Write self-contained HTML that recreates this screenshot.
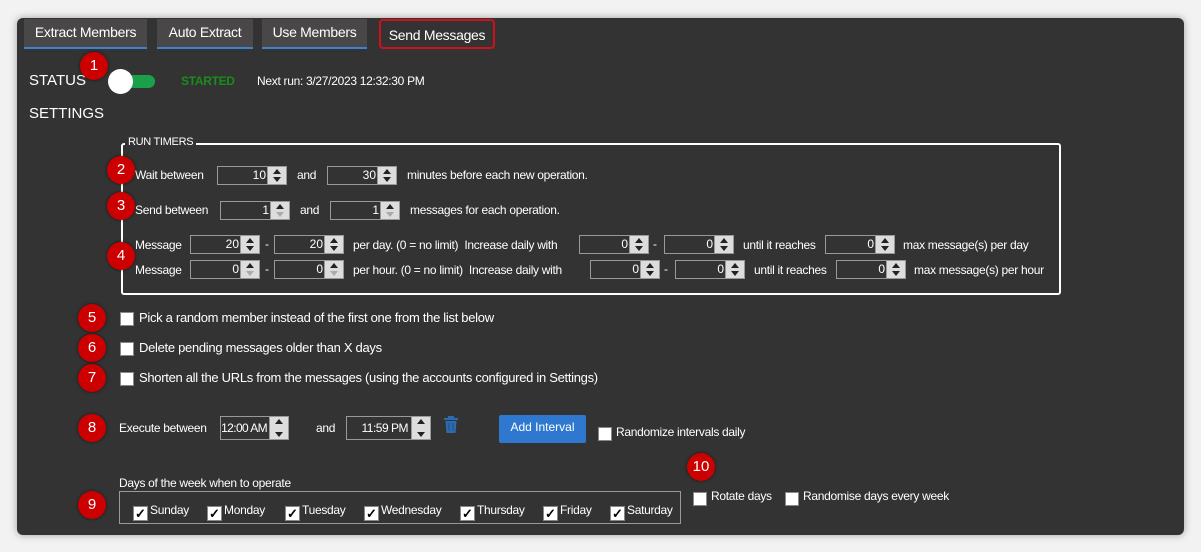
<!DOCTYPE html>
<html><head><meta charset="utf-8"><style>
body{margin:0;width:1201px;height:552px;background:#f2f2f2;position:relative;overflow:hidden;font-family:"Liberation Sans",sans-serif;color:#fff}
#win{position:absolute;left:17px;top:18px;width:1167px;height:517px;background:#333;border-radius:6px;box-shadow:0 0 8px rgba(0,0,0,.35)}
.a{position:absolute;white-space:nowrap}
.s{font-size:12px;letter-spacing:-.3px}
.m{font-size:13px;letter-spacing:-.3px}
.tab{position:absolute;top:19px;height:28px;background:#4a4748;border-bottom:2px solid #3b82d0;font-size:14px;letter-spacing:-.3px;line-height:26px;text-align:center;color:#fff}
.c{position:absolute;width:28px;height:28px;border-radius:50%;background:#c00;box-shadow:0 0 3px rgba(0,0,0,.6);color:#fff;font-size:15px;text-align:center;line-height:28px}
.box{position:absolute;border:1px solid #999;background:#333;box-sizing:border-box;height:19px;font-size:12px;line-height:17px;text-align:right}
.box span{position:absolute;right:20px;top:0;white-space:nowrap}
.sp{position:absolute;right:0;top:0;width:18px;height:17px;background:#ddd;border-left:1px solid #999}
.sp:before,.sp:after{content:"";position:absolute;left:5px;border-left:4px solid transparent;border-right:4px solid transparent}
.sp:before{top:2px;border-bottom:5px solid #222}
.sp:after{bottom:2px;border-top:5px solid #222}
.sp.g:after{border-top-color:#aaa}
.cb{position:absolute;width:12px;height:12px;background:#fff;border:1px solid #888}
.ck{position:absolute;width:13px;height:13px;background:#fff;border:1px solid #888;color:#000;font-size:13px;line-height:13px;text-align:center;font-weight:bold}
</style></head><body>
<div id="win"></div>
<div class="tab" style="left:24px;width:123px">Extract Members</div>
<div class="tab" style="left:157px;width:96px">Auto Extract</div>
<div class="tab" style="left:262px;width:105px">Use Members</div>
<div class="a" style="left:379px;top:19px;width:116px;height:30px;border:2px solid #d0101c;border-radius:4px;box-sizing:border-box;font-size:14px;letter-spacing:-.3px;text-align:center;line-height:28px">Send Messages</div>

<div class="a" style="left:29px;top:72px;font-size:15px">STATUS</div>
<div class="a" style="left:112px;top:75px;width:43px;height:13px;background:#1aa04a;border-radius:7px"></div>
<div class="a" style="left:108px;top:69px;width:25px;height:25px;background:#fff;border-radius:50%"></div>
<div class="a s" style="left:181px;top:74px;color:#1a8c1a;font-weight:bold">STARTED</div>
<div class="a s" style="left:257px;top:74px">Next run: 3/27/2023 12:32:30 PM</div>
<div class="a" style="left:29px;top:105px;font-size:15px">SETTINGS</div>

<div class="a" style="left:121px;top:143px;width:940px;height:152px;border:2px solid #fff;border-radius:3px;box-sizing:border-box"></div>
<div class="a s" style="left:125px;top:136px;background:#333;padding:0 3px;font-size:11px">RUN TIMERS</div>

<div class="a s" style="left:135px;top:168px">Wait between</div>
<div class="box" style="left:217px;top:166px;width:70px"><span>10</span><div class="sp"></div></div>
<div class="a s" style="left:297px;top:168px">and</div>
<div class="box" style="left:327px;top:166px;width:70px"><span>30</span><div class="sp"></div></div>
<div class="a s" style="left:407px;top:168px">minutes before each new operation.</div>

<div class="a s" style="left:135px;top:203px">Send between</div>
<div class="box" style="left:220px;top:201px;width:70px"><span>1</span><div class="sp g"></div></div>
<div class="a s" style="left:300px;top:203px">and</div>
<div class="box" style="left:330px;top:201px;width:70px"><span>1</span><div class="sp g"></div></div>
<div class="a s" style="left:410px;top:203px">messages for each operation.</div>

<div class="a s" style="left:135px;top:238px">Message</div>
<div class="box" style="left:190px;top:235px;width:70px"><span>20</span><div class="sp"></div></div>
<div class="a s" style="left:265px;top:237px">-</div>
<div class="box" style="left:274px;top:235px;width:70px"><span>20</span><div class="sp"></div></div>
<div class="a s" style="left:353px;top:238px">per day. (0 = no limit)&nbsp; Increase daily with</div>
<div class="box" style="left:579px;top:235px;width:70px"><span>0</span><div class="sp"></div></div>
<div class="a s" style="left:653px;top:237px">-</div>
<div class="box" style="left:664px;top:235px;width:70px"><span>0</span><div class="sp"></div></div>
<div class="a s" style="left:743px;top:238px">until it reaches</div>
<div class="box" style="left:825px;top:235px;width:70px"><span>0</span><div class="sp"></div></div>
<div class="a s" style="left:903px;top:238px">max message(s) per day</div>

<div class="a s" style="left:135px;top:263px">Message</div>
<div class="box" style="left:190px;top:260px;width:70px"><span>0</span><div class="sp g"></div></div>
<div class="a s" style="left:265px;top:262px">-</div>
<div class="box" style="left:274px;top:260px;width:70px"><span>0</span><div class="sp g"></div></div>
<div class="a s" style="left:353px;top:263px">per hour. (0 = no limit)&nbsp; Increase daily with</div>
<div class="box" style="left:590px;top:260px;width:70px"><span>0</span><div class="sp"></div></div>
<div class="a s" style="left:664px;top:262px">-</div>
<div class="box" style="left:675px;top:260px;width:70px"><span>0</span><div class="sp"></div></div>
<div class="a s" style="left:754px;top:263px">until it reaches</div>
<div class="box" style="left:836px;top:260px;width:70px"><span>0</span><div class="sp"></div></div>
<div class="a s" style="left:914px;top:263px">max message(s) per hour</div>

<div class="cb" style="left:120px;top:312px"></div><div class="a m" style="left:139px;top:310px">Pick a random member instead of the first one from the list below</div>
<div class="cb" style="left:120px;top:342px"></div><div class="a m" style="left:139px;top:340px">Delete pending messages older than X days</div>
<div class="cb" style="left:120px;top:372px"></div><div class="a m" style="left:139px;top:370px">Shorten all the URLs from the messages (using the accounts configured in Settings)</div>

<div class="a s" style="left:119px;top:421px">Execute between</div>
<div class="box" style="left:220px;top:416px;width:69px;height:24px;line-height:22px"><span style="right:21px;letter-spacing:-.6px">12:00 AM</span><div class="sp" style="height:22px"></div></div>
<div class="a s" style="left:316px;top:421px">and</div>
<div class="box" style="left:346px;top:416px;width:85px;height:24px;line-height:22px"><span style="right:22px;letter-spacing:-.5px">11:59 PM</span><div class="sp" style="height:22px"></div></div>
<svg class="a" style="left:444px;top:416px" width="14" height="17" viewBox="0 0 14 17"><rect x="4" y="0" width="6" height="2" fill="#2b6cb0"/><rect x="0" y="2" width="14" height="2" fill="#2b6cb0"/><path d="M1.5 5h11l-1 12h-9z" fill="#2b6cb0"/><path d="M5 7v8M9 7v8" stroke="#1d4f85" stroke-width="1"/></svg>
<div class="a" style="left:499px;top:415px;width:87px;height:28px;background:#2f78cf;border-radius:2px;font-size:12px;text-align:center;line-height:24px">Add Interval</div>
<div class="cb" style="left:598px;top:427px"></div><div class="a s" style="left:616px;top:425px">Randomize intervals daily</div>

<div class="a s" style="left:119px;top:476px">Days of the week when to operate</div>
<div class="a" style="left:119px;top:491px;width:562px;height:33px;border:1px solid #999;box-sizing:border-box"></div>
<div class="ck" style="left:133px;top:506px">✓</div><div class="a s" style="left:150px;top:503px">Sunday</div>
<div class="ck" style="left:207px;top:506px">✓</div><div class="a s" style="left:224px;top:503px">Monday</div>
<div class="ck" style="left:285px;top:506px">✓</div><div class="a s" style="left:302px;top:503px">Tuesday</div>
<div class="ck" style="left:364px;top:506px">✓</div><div class="a s" style="left:381px;top:503px">Wednesday</div>
<div class="ck" style="left:460px;top:506px">✓</div><div class="a s" style="left:477px;top:503px">Thursday</div>
<div class="ck" style="left:543px;top:506px">✓</div><div class="a s" style="left:560px;top:503px">Friday</div>
<div class="ck" style="left:610px;top:506px">✓</div><div class="a s" style="left:627px;top:503px">Saturday</div>
<div class="cb" style="left:693px;top:492px"></div><div class="a s" style="left:711px;top:489px">Rotate days</div>
<div class="cb" style="left:785px;top:492px"></div><div class="a s" style="left:803px;top:489px">Randomise days every week</div>

<div class="c" style="left:80px;top:52px">1</div>
<div class="c" style="left:107px;top:156px">2</div>
<div class="c" style="left:107px;top:192px">3</div>
<div class="c" style="left:107px;top:242px">4</div>
<div class="c" style="left:78px;top:304px">5</div>
<div class="c" style="left:78px;top:334px">6</div>
<div class="c" style="left:78px;top:364px">7</div>
<div class="c" style="left:78px;top:414px">8</div>
<div class="c" style="left:78px;top:491px">9</div>
<div class="c" style="left:687px;top:453px">10</div>
</body></html>
